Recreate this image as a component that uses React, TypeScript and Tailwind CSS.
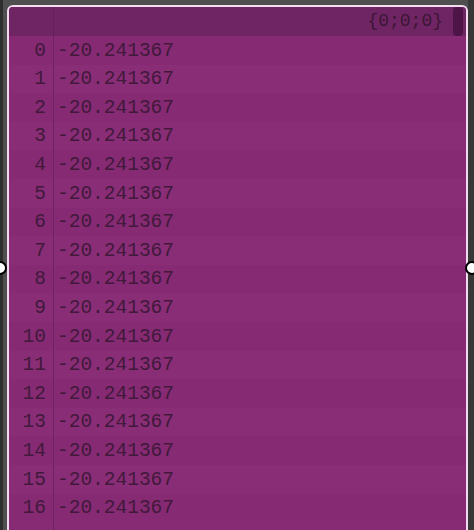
import React from "react";

export default function App() {
  const rows = Array.from({ length: 17 }, (_, i) => i);
  return (
    <div className="relative w-[474px] h-[530px] overflow-hidden bg-[#4f4f4f]" style={{ fontFamily: '"Liberation Mono", "DejaVu Sans Mono", monospace' }}>
      <div className="absolute left-0 top-0 w-[3px] h-full bg-[#2e2e2e]" />
      <div className="absolute right-0 top-0 w-[6px] h-full bg-[#383838]" />
      <div className="pl-[7px] pt-[5px]">
        <div className="w-[461px] h-[540px] border-2 border-b-0 border-[#f1dbed] rounded-t-[6px] overflow-hidden bg-[#872b74] flex flex-col">
          <div className="h-[29px] shrink-0 bg-[#6f2563] flex items-stretch">
            <div className="w-[45px] border-r border-[#66205a]" />
            <div className="flex-1 flex items-center justify-end pr-[10px] text-[18px] text-[#3c1636]">{"{0;0;0}"}</div>
            <div className="w-[10px] mr-[3px] rounded-[4px] bg-[#4e1447]" />
          </div>
          {rows.map((i) => (
            <div
              key={i}
              className={`h-[28.6px] shrink-0 flex items-center text-[19.5px] text-[#41193b] ${i % 2 === 0 ? "bg-[#862a73]" : "bg-[#8a2d77]"}`}
            >
              <div className="w-[45px] h-full flex items-center justify-end pr-[7px] pt-[2px] border-r border-[#6e2262]">{i}</div>
              <div className="pl-[3px] pt-[2px]">-20.241367</div>
            </div>
          ))}
          <div className="flex-1 flex">
            <div className="w-[45px] border-r border-[#6e2262]" />
          </div>
        </div>
      </div>
      <div className="absolute left-[-7px] top-[261px] w-[14px] h-[14px] rounded-full bg-white border-2 border-black" />
      <div className="absolute left-[465px] top-[261px] w-[14px] h-[14px] rounded-full bg-white border-2 border-black" />
    </div>
  );
}
